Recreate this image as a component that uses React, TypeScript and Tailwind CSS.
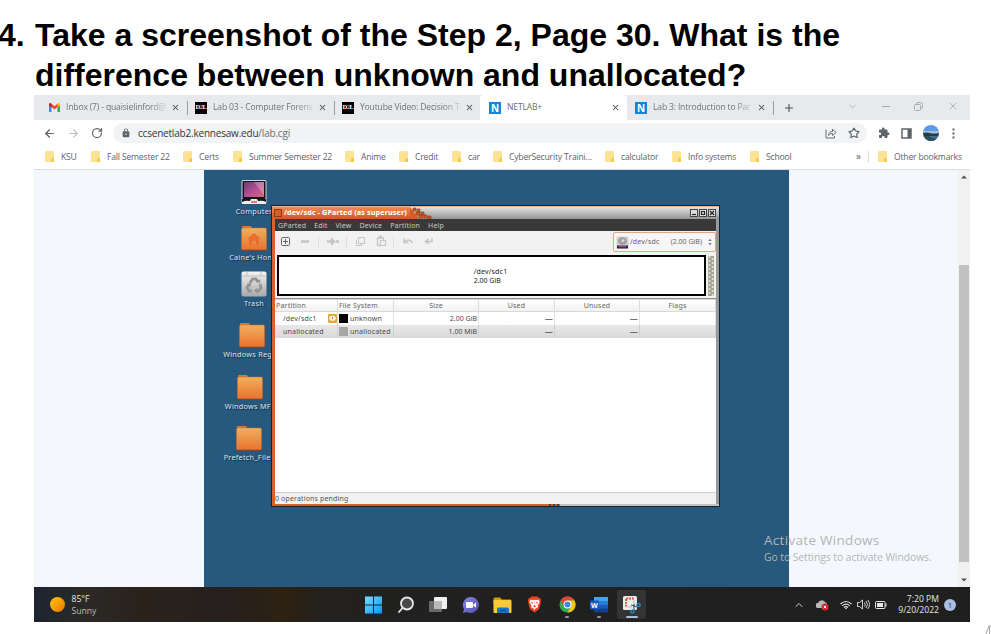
import type { ReactNode } from "react";
import { ArrowLeft, ArrowRight, RotateCw, Plus, X, Star, ChevronDown, ChevronUp } from "lucide-react";
import { MdExtension, MdLock } from "react-icons/md";

const bookmarks = [
    { label: "KSU", width: "w-[46px]" },
    { label: "Fall Semester 22", width: "w-[92px]" },
    { label: "Certs", width: "w-[50px]" },
    { label: "Summer Semester 22", width: "w-[112px]" },
    { label: "Anime", width: "w-[54px]" },
    { label: "Credit", width: "w-[53px]" },
    { label: "car", width: "w-[41px]" },
    { label: "CyberSecurity Traini...", width: "w-[112px]" },
    { label: "calculator", width: "w-[67px]" },
    { label: "Info systems", width: "w-[78px]" },
    { label: "School", width: "w-[60px]" },
];

function FolderMark() {
    return (
        <svg width="9" height="11" viewBox="0 0 9 11" className="shrink-0">
            <rect width="9" height="11" rx="1" fill="#fde293" />
            <path d="M6 10.5V8.2a1.2 1.2 0 0 1 3 0V11H6z" fill="#f6c945" />
        </svg>
    );
}

function GmailIcon() {
    return (
        <svg width="11" height="9" viewBox="0 0 22 18" className="shrink-0">
            <path d="M0 3v15h5V7z" fill="#4285f4" />
            <path d="M22 3v15h-5V7z" fill="#34a853" />
            <path d="M0 3q0-3 3-3l8 6.500L19 0v6l-8 7-6-5-5-3z" fill="#ea4335" />
            <path d="M17 2l2-2q3 0 3 3v2l-5 4z" fill="#fbbc04" />
            <path d="M0 3q0-3 3-3l2 2v7L0 5z" fill="#c5221f" />
        </svg>
    );
}

function D2LIcon() {
    return (
        <span className="flex h-[12px] w-[12px] shrink-0 items-center justify-center bg-black font-['Liberation_Serif',serif] text-[6.5px] font-bold leading-none tracking-[-0.5px] text-white">
            D<span className="text-[#f0b080]">2</span>L
        </span>
    );
}

function NetlabIcon() {
    return (
        <span className="flex h-[12px] w-[12px] shrink-0 items-center justify-center bg-[#0f87e0] text-[10px] font-bold leading-none text-white">N</span>
    );
}

type TabProps = { icon: ReactNode; label: string; className: string; active?: boolean; divider?: boolean };

function Tab({ icon, label, className, active, divider }: TabProps) {
    return (
        <div className={`flex h-full shrink-0 items-center ${active ? "rounded-t-[4px] bg-white" : ""} ${className}`}>
            {icon}
            <span
                className={`ml-[6px] flex-1 whitespace-nowrap text-[8.6px] tracking-[-0.18px] ${
                    active
                        ? "text-[#6b6e73]"
                        : "bg-[linear-gradient(90deg,#6b6e73_82%,#d5d7da_100%)] bg-clip-text text-transparent"
                }`}
            >
                {label}
            </span>
            <X size={9} strokeWidth={2.800} className="ml-[4px] shrink-0 text-[#55585c]" />
            {divider && <span className="ml-[7px] h-[14px] w-px bg-[#9c9ea2]" />}
        </div>
    );
}

function TabStrip() {
    return (
        <div className="flex h-[25px] items-center bg-[#e8e9ed]">
            <Tab icon={<GmailIcon />} label="Inbox (7) - quaisielinford@" className="w-[154px] pl-[15px]" divider />
            <Tab icon={<D2LIcon />} label="Lab 03 - Computer Forens" className="w-[147px] pl-[7px]" divider />
            <Tab icon={<D2LIcon />} label="Youtube Video: Decision T" className="w-[145px] pl-[7px] pr-[6px]" />
            <Tab icon={<NetlabIcon />} label="NETLAB+" className="w-[147px] pl-[9px] pr-[7px]" active />
            <Tab icon={<NetlabIcon />} label="Lab 3: Introduction to Par" className="w-[147px] pl-[8px]" divider />
            <Plus size={12} strokeWidth={2.200} className="ml-[9px] shrink-0 text-[#4d5054]" />
            <div className="mb-[3px] ml-auto mr-[11px] flex w-[112px] items-center justify-between text-[#a9abaf]">
                <ChevronDown size={11} strokeWidth={1.800} />
                <svg width="8" height="10" viewBox="0 0 8 10"><path d="M0 5.500h8" stroke="currentColor" /></svg>
                <svg width="9" height="9" viewBox="0 0 9 9" fill="none" stroke="currentColor">
                    <rect x=".5" y="2.500" width="6" height="6" rx="1" />
                    <path d="M2.500 2.500V2q0-1.500 1.500-1.500h2.500q2 0 2 2V5q0 1.500-1.500 1.500" />
                </svg>
                <X size={12} strokeWidth={1.800} />
            </div>
        </div>
    );
}

function Toolbar() {
    return (
        <div className="flex h-[25px] items-center pt-[1px] text-[#5f6368]">
            <ArrowLeft size={13} strokeWidth={2.200} className="ml-[9px]" />
            <ArrowRight size={13} strokeWidth={2} className="ml-[11px] text-[#bbbdc0]" />
            <RotateCw size={12} strokeWidth={2.500} className="ml-[11px]" />
            <div className="ml-[10px] flex h-[20px] w-[754px] items-center rounded-full bg-[#f1f3f4] pl-[8px] pr-[7px]">
                <MdLock size={10} />
                <span className="ml-[7px] whitespace-nowrap text-[10px] tracking-[-0.2px] text-[#33363a]">
                    ccsenetlab2.kennesaw.edu<span className="text-[#6b6f74]">/lab.cgi</span>
                </span>
                <svg width="12" height="12" viewBox="0 0 12 12" fill="none" stroke="currentColor" className="ml-auto mr-[-1px]">
                    <path d="M1 2.500v8.500h8.500V9M3.500 8.500C4 5.500 5.500 4.500 7.500 4.500V2l3.500 3.500-3.500 3V6.500Q5 6.300 3.500 8.500z" strokeWidth=".9" />
                </svg>
                <Star size={12} strokeWidth={2.300} className="ml-[12px]" />
            </div>
            <MdExtension size={12} className="ml-[11px]" />
            <svg width="11" height="11" viewBox="0 0 11 11" className="ml-[11px]">
                <path d="M1 1h9v9H1z" fill="none" stroke="currentColor" strokeWidth="1.500" />
                <path d="M6.500 1H10v9H6.500z" fill="currentColor" />
            </svg>
            <svg width="16" height="16" viewBox="0 0 16 16" className="ml-[11px]">
                <defs><clipPath id="avatar"><circle cx="8" cy="8" r="8" /></clipPath></defs>
                <g clipPath="url(#avatar)">
                    <rect width="16" height="9" fill="#5c9be6" />
                    <rect y="6" width="16" height="3" fill="#a3bfdc" />
                    <path d="M0 8q4-1 7 0t9 0v4H0z" fill="#263c3e" />
                    <rect y="11" width="16" height="5" fill="#3d6f9e" />
                    <path d="M0 11h6l3 2 7 1v2H0z" fill="#304d5b" />
                </g>
            </svg>
            <svg width="3" height="11" viewBox="0 0 3 11" className="ml-[13px]" fill="currentColor">
                <rect x=".5" y=".5" width="2" height="2" />
                <rect x=".5" y="4.500" width="2" height="2" />
                <rect x=".5" y="8.500" width="2" height="2" />
            </svg>
        </div>
    );
}

function BookmarkBar() {
    return (
        <div className="flex h-[25px] items-center border-b border-[#d9dcdf] pl-[11px] text-[8.6px] text-[#5f6368]">
            {bookmarks.map((b) => (
                <div key={b.label} className={`flex shrink-0 items-center gap-[7px] whitespace-nowrap tracking-[-0.18px] ${b.width}`}>
                    <FolderMark />
                    {b.label}
                </div>
            ))}
            <span className="mb-[2px] ml-[46px] text-[10px] leading-none">»</span>
            <span className="ml-[7px] h-[12px] w-px bg-[#dadce0]" />
            <div className="ml-[9px] flex items-center gap-[7px] whitespace-nowrap tracking-[-0.18px]">
                <FolderMark />
                Other bookmarks
            </div>
        </div>
    );
}

function DesktopFolder({ home }: { home?: boolean }) {
    return (
        <svg width="26" height="26" viewBox="0 0 26 26">
            <defs>
                <linearGradient id="folder" x1="0" y1="0" x2="0" y2="1">
                    <stop offset="0" stopColor="#efb05c" />
                    <stop offset="1" stopColor="#ea722e" />
                </linearGradient>
            </defs>
            <path d="M1 5V2q0-1 1-1h8l1 2h13q1 0 1 1v21H1z" fill="#d97832" />
            <rect x=".5" y="3" width="25" height="22" rx="1.500" fill="url(#folder)" stroke="#ce6a2c" strokeWidth=".5" />
            <path d="M1 25.300h24" stroke="#873f1d" />
            {home && <path d="M13 8l7 6h-2v6h-3v-4h-4v4H8v-6H6z" fill="#e86f31" />}
        </svg>
    );
}

function ComputerIcon() {
    return (
        <svg width="26" height="26" viewBox="0 0 26 26">
            <defs>
                <linearGradient id="screen" x1="0" y1="0" x2="1" y2="1">
                    <stop offset="0" stopColor="#6d3c76" />
                    <stop offset=".5" stopColor="#b04e92" />
                    <stop offset="1" stopColor="#d96a7d" />
                </linearGradient>
            </defs>
            <rect x=".5" y="1" width="25" height="24" rx="2" fill="#d8d8d8" />
            <rect x="1.500" y="2" width="23" height="18" rx="1" fill="#17131a" />
            <rect x="3" y="3" width="20" height="15" fill="url(#screen)" />
            <path d="M13 3h10v13z" fill="#fff" opacity=".25" />
            <path d="M1 20h24v5H1z" fill="#171717" />
            <path d="M1 23q4-2 8-1l1-2h6l1 2q5-1 8 1v2H1z" fill="#eee" />
            <path d="M10 23h6" stroke="#d11" />
        </svg>
    );
}

function TrashIcon() {
    return (
        <svg width="26" height="26" viewBox="0 0 26 26">
            <defs>
                <linearGradient id="bin" x1="0" y1="0" x2="0" y2="1">
                    <stop offset="0" stopColor="#f3f3f3" />
                    <stop offset="1" stopColor="#a9a9a9" />
                </linearGradient>
            </defs>
            <rect x=".5" y=".5" width="25" height="25" rx="2" fill="url(#bin)" />
            <path d="M1 5h24M6 1v4M20 1v4" stroke="#bfbfbf" />
            <g fill="none" stroke="#949494" strokeWidth="2.800">
                <path d="M9 12l2.500-4h3.500l2 3M19 13l1 4-3 3h-2M11 20H8l-2-3 2-4" />
            </g>
            <path d="M15 11l4 1 .5-4zM16 17v5l-3-2.500zM6 13l4-1v4z" fill="#949494" />
        </svg>
    );
}

const desktopIcons = [
    { label: "Computer", icon: <ComputerIcon />, pos: "left-[10px] top-[9px]" },
    { label: "Caine's Home", icon: <DesktopFolder home />, pos: "left-[10px] top-[55px]" },
    { label: "Trash", icon: <TrashIcon />, pos: "left-[10px] top-[101px]" },
    { label: "Windows Regist", icon: <DesktopFolder />, pos: "left-[8px] top-[152px]" },
    { label: "Windows MFT", icon: <DesktopFolder />, pos: "left-[6px] top-[204px]" },
    { label: "Prefetch_Files", icon: <DesktopFolder />, pos: "left-[5px] top-[255px]" },
];

function WindowButton({ children }: { children: ReactNode }) {
    return (
        <span className="flex h-[8px] w-[8px] items-center justify-center border border-[#454545] bg-[#dcdcdc]">
            <svg width="6" height="6" viewBox="0 0 6 6" fill="none" stroke="#222" strokeWidth="1.200">{children}</svg>
        </span>
    );
}

function GpartedToolbar() {
    return (
        <div className="flex h-[22px] shrink-0 items-center bg-[#f1f1f1] pl-[6px] text-[#c5c5c5]">
            <svg width="160" height="22" viewBox="0 0 160 22" fill="none" stroke="currentColor">
                <g stroke="#666">
                    <rect x=".5" y="6.500" width="8" height="8" rx="1" />
                    <path d="M2 10.500h5M4.500 8v5" />
                </g>
                <path d="M20 10.500h8" strokeWidth="2.500" />
                <path d="M37.500 5v12M65.500 5v12M112.500 5v12" stroke="#dedede" />
                <path d="M46 10.500h5M55 10.500h3" strokeWidth="2.500" />
                <path d="M50 6l5 4.500-5 4.500z" fill="currentColor" stroke="none" />
                <path d="M77.500 6.500h6v6h-6zM76 9h-.5v5.500h5V13" />
                <path d="M96.500 7v7.500H100M96.500 7h6v2.500M98 5.500h3" strokeWidth="1.300" />
                <rect x="99.500" y="9.500" width="5" height="5" />
                <path d="M124 10.500q5-3.500 7.500 1.500M123 7.500v4h4.500" strokeWidth="1.500" />
                <path d="M151 7v3.500h-6M147.500 8l-3 2.500 3 2.500" strokeWidth="1.500" />
            </svg>
            <div className="ml-auto flex h-[20px] w-[103px] items-center rounded-[2px] border border-[#e8a482] bg-[#f6f6f6] pl-[2px] pr-[3px] text-[7px] text-[#666]">
                <svg width="13" height="13" viewBox="0 0 13 13">
                    <rect x=".5" y=".5" width="12" height="12" rx="1.500" fill="#cfcfcf" />
                    <ellipse cx="6.500" cy="5" rx="4" ry="3.200" fill="#a8a8a8" stroke="#898989" strokeWidth=".6" />
                    <circle cx="7" cy="4.500" r="1.300" fill="#ddd" />
                    <path d="M1 9.500h11v3H1z" fill="#37272f" />
                    <path d="M3 10.700h7" stroke="#bd4caf" />
                </svg>
                <span className="ml-[1px] tracking-[0.2px]">/dev/sdc</span>
                <span className="ml-auto mr-[6px]">(2.00 GiB)</span>
                <svg width="4" height="8" viewBox="0 0 4 8" fill="#777"><path d="M.3 3L2 .8 3.700 3zM.3 5h3.400L2 7.200z" /></svg>
            </div>
        </div>
    );
}

const cols = "grid grid-cols-[63px_56px_85px_76px_85px_76px]";

function PartitionTable() {
    return (
        <div className="mt-px flex-1 bg-white text-[7px] leading-none tracking-[0.2px] text-[#4a4a4a]">
            <div className={`${cols} h-[13px] border-y border-[#d9d9d9] bg-gradient-to-b from-white to-[#f1f1f1] text-[#666] *:flex *:items-center *:border-r *:border-[#ddd]`}>
                <span className="pl-[1px]">Partition</span>
                <span className="pl-[1px]">File System</span>
                <span className="justify-center">Size</span>
                <span className="justify-center">Used</span>
                <span className="justify-center">Unused</span>
                <span className="justify-center">Flags</span>
            </div>
            <div className={`${cols} h-[13px] *:flex *:items-center *:border-r *:border-[#e4e4e4]`}>
                <span className="pl-[8px]">
                    /dev/sdc1
                    <svg width="9" height="9" viewBox="0 0 9 9" className="ml-auto">
                        <rect width="9" height="9" rx="1" fill="#e0a63e" />
                        <ellipse cx="4.500" cy="4.200" rx="3.300" ry="2.600" fill="#fff4d6" />
                        <path d="M4.500 2.500v2.500" stroke="#c78217" strokeWidth=".8" />
                    </svg>
                </span>
                <span className="pl-[1px]"><i className="mr-[2px] h-[9px] w-[9px] shrink-0 bg-black" />unknown</span>
                <span className="justify-end pr-[1px] tracking-[0px]">2.00 GiB</span>
                <span className="justify-end pr-[1px] text-[8px]">—</span>
                <span className="justify-end pr-[1px] text-[8px]">—</span>
                <span />
            </div>
            <div className={`${cols} h-[13px] bg-gradient-to-b from-[#e8e8e8] to-[#d9d9d9] *:flex *:items-center *:border-r *:border-[#d0d0d0]`}>
                <span className="pl-[8px]">unallocated</span>
                <span className="pl-[1px]"><i className="mr-[2px] h-[9px] w-[9px] shrink-0 bg-[#a6a6a6]" />unallocated</span>
                <span className="justify-end pr-[1px] tracking-[0px]">1.00 MiB</span>
                <span className="justify-end pr-[1px] text-[8px]">—</span>
                <span className="justify-end pr-[1px] text-[8px]">—</span>
                <span />
            </div>
        </div>
    );
}

function GpartedWindow() {
    return (
        <div className="absolute left-[67px] top-[35px] flex h-[302px] w-[449px] flex-col overflow-hidden border border-[#16232d] bg-[#8e8e8e]">
            <div className="flex h-[13px] shrink-0 items-center border-t border-[#e9b394] bg-gradient-to-b from-[#e4e4e4] to-[#949494]">
                <div className="flex h-full w-[138px] items-center bg-gradient-to-b from-[#f08a54] to-[#d4561e] pl-[2px]">
                    <span className="h-[8px] w-[8px] shrink-0 border border-[#8b3b16] bg-[#d65f29]" />
                    <span className="ml-[2px] whitespace-nowrap text-[7.3px] font-bold leading-none tracking-[0.08px] text-white">/dev/sdc - GParted (as superuser)</span>
                </div>
                <svg width="22" height="12" viewBox="0 0 22 12" fill="#d85c23">
                    <path d="M0 0l9 12H0z" />
                    <path d="M3 1h3v3H3zM7 2h3v3H7zM6 5h4v3H6zM11 5h3v3h-3zM9 8h4v3H9zM14 8h3v3h-3zM18 9h3v3h-3z" stroke="#813817" strokeWidth=".6" />
                </svg>
                <div className="ml-auto mr-[3px] flex gap-[1px]">
                    <WindowButton><path d="M1 4.500h4" /></WindowButton>
                    <WindowButton><path d="M1.500 1.500h3v3h-3z" /></WindowButton>
                    <WindowButton><path d="M1 1l4 4M5 1L1 5" /></WindowButton>
                </div>
            </div>
            <div className="flex min-h-0 flex-1 flex-col border-l-3 border-r-3 border-l-[#d9622b] border-r-[#999]">
                <div className="flex h-[12px] shrink-0 items-center gap-[8px] bg-[#393939] pl-[3px] text-[7px] leading-none tracking-[0.18px] text-[#c9c9c9]">
                    <span>GParted</span><span>Edit</span><span>View</span><span>Device</span><span>Partition</span><span>Help</span>
                </div>
                <GpartedToolbar />
                <div className="flex h-[45px] shrink-0 items-center gap-[2px] bg-[#f3f3f3] pl-[2px]">
                    <div className="flex h-[41px] w-[429px] flex-col items-center justify-center border-2 border-black bg-white pr-[2px] text-[7px] leading-[9px] text-[#222]">
                        <div>
                            <div className="tracking-[0.2px]">/dev/sdc1</div>
                            <div>2.00 GiB</div>
                        </div>
                    </div>
                    <svg width="6" height="40" viewBox="0 0 6 40">
                        <rect width="6" height="40" fill="#a3a3a3" />
                        <path d="M1.500 0v40M4.500 2v38" stroke="#e8e8b8" strokeWidth="1.500" strokeDasharray="2 2" />
                    </svg>
                </div>
                <PartitionTable />
                <div className="flex h-[12px] shrink-0 items-center border-t border-[#d0d0d0] bg-[#f1f1f1] text-[7px] leading-none tracking-[0.15px] text-[#555]">
                    0 operations pending
                </div>
            </div>
            <div className="flex h-[2px] shrink-0">
                <span className="w-[277px] bg-[#d0662f]" />
                <span className="w-[11px] bg-[repeating-linear-gradient(90deg,#444_0_2px,#c4622f_2px_4px)]" />
                <span className="flex-1 bg-[#c4c4c4]" />
            </div>
        </div>
    );
}

function RemoteDesktop() {
    return (
        <div className="relative ml-[170px] h-full w-[585px] overflow-hidden bg-[#27597e] font-['Noto_Sans',sans-serif]">
            {desktopIcons.map((d) => (
                <div key={d.label} className={`absolute flex w-[80px] flex-col items-center ${d.pos}`}>
                    {d.icon}
                    <span className="mt-[1px] whitespace-nowrap text-[7.3px] leading-[11px] tracking-[0.25px] text-[#dfe6eb] [text-shadow:1px_1px_1px_#12283a]">{d.label}</span>
                </div>
            ))}
            <GpartedWindow />
        </div>
    );
}

function TaskIcon({ children, running, active }: { children: ReactNode; running?: boolean; active?: boolean }) {
    return (
        <div className={`relative flex h-[29px] w-[29px] items-center justify-center ${active ? "rounded-[3px] bg-[#343434]" : ""}`}>
            {children}
            {running && <span className="absolute bottom-[1px] h-[2px] w-[4px] rounded-full bg-[#999]" />}
            {active && <span className="absolute bottom-[1px] h-[2px] w-[12px] rounded-full bg-[#acbddb]" />}
        </div>
    );
}

function TaskbarApps() {
    return (
        <div className="flex items-center gap-[3.200px]">
            <TaskIcon>
                <svg width="18" height="18" viewBox="0 0 18 18">
                    <defs><linearGradient id="win" x1="0" y1="0" x2="1" y2="1"><stop offset="0" stopColor="#7bdcff" /><stop offset="1" stopColor="#0796f2" /></linearGradient></defs>
                    <path d="M0 .500h8v8H0zM9 .500h8v8H9zM0 9.500h8v8H0zM9 9.500h8v8H9z" fill="url(#win)" />
                </svg>
            </TaskIcon>
            <TaskIcon>
                <svg width="18" height="18" viewBox="0 0 18 18" fill="none" stroke="#e9e9e9" strokeWidth="1.800">
                    <circle cx="10" cy="7.500" r="6" fill="#494949" />
                    <path d="M5.500 12L2 16" strokeLinecap="round" />
                </svg>
            </TaskIcon>
            <TaskIcon>
                <svg width="18" height="18" viewBox="0 0 18 18">
                    <rect x="5" y="1" width="13" height="12" rx="1" fill="#efefef" />
                    <rect x="0" y="5" width="13" height="11" rx="1" fill="#777" opacity=".85" />
                    <path d="M5 5h8v8H5z" fill="#b9b9b9" />
                </svg>
            </TaskIcon>
            <TaskIcon>
                <svg width="18" height="18" viewBox="0 0 18 18">
                    <defs><linearGradient id="chat" x1="0" y1="0" x2="1" y2="1"><stop offset="0" stopColor="#8c88e0" /><stop offset="1" stopColor="#4d4eb6" /></linearGradient></defs>
                    <path d="M9 1a8 8 0 1 1-4 15l-4 1 1-4A8 8 0 0 1 9 1z" fill="url(#chat)" />
                    <rect x="4" y="6" width="7" height="6" rx="1" fill="#fff" />
                    <path d="M11.500 8.500L14 6.500v5L11.500 10z" fill="#fff" />
                </svg>
            </TaskIcon>
            <TaskIcon>
                <svg width="19" height="18" viewBox="0 0 19 18">
                    <path d="M.5 3q0-1.500 1.500-1.500h5l2 2h9V8H.5z" fill="#d79812" />
                    <rect x=".5" y="4" width="18" height="13" rx="1" fill="#fcc938" />
                    <path d="M4 17v-4q0-1.500 1.500-1.500h9q1.500 0 1.500 1.500v4z" fill="#1674bd" />
                    <path d="M7 14.500h6" stroke="#0b4d8c" />
                </svg>
            </TaskIcon>
            <TaskIcon>
                <svg width="15" height="17" viewBox="0 0 17 18">
                    <path d="M5 0h7l1.500 1.500L15 1.500l1 3-.7 1.500.2 1.500-2 7L8.500 18l-5-3.500-2-7 .2-1.500L1 4.500l1-3 1.500 0z" fill="#f4421d" />
                    <path d="M4 3.500l3 .5 1.500-.5L10 4l3-.5 1.500 2.500-2.500 4 .5 2-3 1.500-1 2-1-2-3-1.500.5-2L2.500 6z" fill="#fff" />
                    <path d="M4.500 6l2.500 1-1 1zM12.500 6L10 7l1 1zM8.500 6v3.500M6.500 11l2-1.200 2 1.200-2 .8z" fill="#f4421d" stroke="#f4421d" strokeWidth=".3" />
                </svg>
            </TaskIcon>
            <TaskIcon running>
                <svg width="17" height="17" viewBox="0 0 18 18">
                    <circle cx="9" cy="9" r="8.500" fill="#37a853" />
                    <path d="M1.600 4.700A8.500 8.500 0 0 1 16.400 4.800H9L5.400 11z" fill="#e54335" />
                    <path d="M16.400 4.800A8.500 8.500 0 0 1 9 17.500L12.600 11 9 4.800z" fill="#fac417" />
                    <circle cx="9" cy="9" r="4.200" fill="#fff" />
                    <circle cx="9" cy="9" r="3.200" fill="#4285f4" />
                </svg>
            </TaskIcon>
            <TaskIcon running>
                <svg width="18" height="17" viewBox="0 0 18 17">
                    <path d="M4 1h14v4H4z" fill="#41a5ee" />
                    <path d="M4 5h14v4H4z" fill="#2b7cd3" />
                    <path d="M4 9h14v4H4z" fill="#185abd" />
                    <path d="M4 12.500h14v4H4z" fill="#103f91" />
                    <rect y="4.500" width="9" height="9" rx="1" fill="#185abd" />
                    <text x="4.500" y="11.500" fill="#fff" fontSize="7" fontWeight="700" textAnchor="middle">W</text>
                </svg>
            </TaskIcon>
            <TaskIcon active>
                <svg width="19" height="19" viewBox="0 0 19 19">
                    <rect x="1" y="1" width="14" height="14" rx="1.500" fill="#ececec" />
                    <path d="M4 11.500V3.500h8.500" fill="none" stroke="#d9492e" strokeWidth="1.800" strokeDasharray="1.800 1" />
                    <path d="M12 5v6M5 12h5" stroke="#bbb" />
                    <path d="M9 10l6 2M12 15V9" stroke="#555" strokeWidth="1.200" />
                    <circle cx="16.500" cy="10" r="1.700" fill="none" stroke="#2292cf" strokeWidth="1.300" />
                    <circle cx="10.500" cy="16.500" r="1.700" fill="none" stroke="#2292cf" strokeWidth="1.300" />
                </svg>
            </TaskIcon>
        </div>
    );
}

function Taskbar() {
    return (
        <div className="flex h-[35px] items-center bg-[linear-gradient(90deg,#1d2430_0%,#2b2927_5%,#2a221b_12%,#26201f_20%,#2d2111_27%,#222120_31%,#1f1f1f_100%)] text-[#e6e6e6]">
            <div className="flex w-[325.500px] items-center pl-[16px]">
                <span className="h-[15px] w-[15px] rounded-full bg-gradient-to-br from-[#fcc80d] to-[#ec7105]" />
                <div className="ml-[6.500px] text-[8.6px] leading-[12px]">
                    <div>85°F</div>
                    <div className="text-[#bdbdbd]">Sunny</div>
                </div>
            </div>
            <TaskbarApps />
            <div className="ml-auto flex items-center pr-[14px]">
                <ChevronUp size={12} strokeWidth={1.800} />
                <svg width="13" height="12" viewBox="0 0 13 12" className="ml-[11px]">
                    <path d="M2 9a2.500 2.500 0 0 1 0-5 4 4 0 0 1 7-1q3 1 2 6z" fill="#b9b9b9" />
                    <circle cx="9" cy="8" r="3.500" fill="#dc2534" />
                    <path d="M7.800 6.800l2.400 2.400M10.200 6.800L7.800 9.200" stroke="#fff" />
                </svg>
                <svg width="12" height="10" viewBox="0 0 12 10" fill="none" stroke="currentColor" className="ml-[11px]">
                    <path d="M.5 4q5.500-5 11 0M2.300 5.800q3.700-3.300 7.400 0M4 7.500q2-1.700 4 0" strokeWidth="1.100" />
                    <circle cx="6" cy="8.500" r=".8" fill="currentColor" stroke="none" />
                </svg>
                <svg width="13" height="11" viewBox="0 0 13 11" fill="none" stroke="currentColor" className="ml-[5px]">
                    <path d="M.5 3.500v4h2l3 2.500V1l-3 2.500zM7.500 3.500q1.500 2 0 4M9 2q3 3.500 0 7M10.800 1q3.500 4.500 0 9" strokeWidth=".9" />
                </svg>
                <svg width="12" height="8" viewBox="0 0 12 8" className="ml-[5px]">
                    <rect x=".5" y=".5" width="9.500" height="7" rx="1" fill="none" stroke="currentColor" />
                    <path d="M2 2h6v4H2zM10.500 2.500h1v3h-1z" fill="currentColor" />
                </svg>
                <div className="ml-[10px] w-[42px] whitespace-nowrap text-right text-[8.600px] leading-[11px]">
                    <div>7:20 PM</div>
                    <div>9/20/2022</div>
                </div>
                <span className="ml-[5px] flex h-[12px] w-[12px] items-center justify-center rounded-full bg-[#a9bfe4] text-[8px] leading-none text-[#303c53]">1</span>
            </div>
        </div>
    );
}

export default function App() {
    return (
        <div className="relative h-[634px] w-[991px] overflow-hidden bg-white font-['Open_Sans','Noto_Sans',sans-serif]">
            <div className="flex h-[95px] pt-[15px] font-['Liberation_Sans',Arial,sans-serif] text-[32px] font-bold leading-[40px] text-black">
                <span className="-ml-[2px] w-[37px] shrink-0">4.</span>
                <h1 className="whitespace-nowrap">Take a screenshot of the Step 2, Page 30. What is the<br />difference between unknown and unallocated?</h1>
            </div>
            <div className="ml-[34px] w-[936px]">
                <TabStrip />
                <Toolbar />
                <BookmarkBar />
                <div className="relative flex h-[417px] bg-[#f4f8fc]">
                    <RemoteDesktop />
                    <div className="ml-auto flex w-[12px] flex-col items-center justify-between bg-[#f1f1f1] py-[5px]">
                        <svg width="6" height="4" viewBox="0 0 6 4"><path d="M0 3.500h6L3 .5z" fill="#505050" /></svg>
                        <div className="mb-[16px] mt-auto h-[297px] w-[10px] bg-[#c1c1c1]" />
                        <svg width="6" height="4" viewBox="0 0 6 4"><path d="M0 .5h6L3 3.500z" fill="#505050" /></svg>
                    </div>
                    <div className="absolute left-[730px] top-[361px] whitespace-nowrap text-[#b2b5b6]">
                        <div className="text-[13.5px] leading-[18px] tracking-[0.3px]">Activate Windows</div>
                        <div className="text-[10.3px] leading-[16px] tracking-[-0.03px]">Go to Settings to activate Windows.</div>
                    </div>
                </div>
                <Taskbar />
            </div>
            <svg width="6" height="9" viewBox="0 0 6 9" className="absolute bottom-0 right-0" fill="none" stroke="#a5a5a5">
                <path d="M1 9L4 1h2M4.500 1v8" />
            </svg>
        </div>
    );
}
